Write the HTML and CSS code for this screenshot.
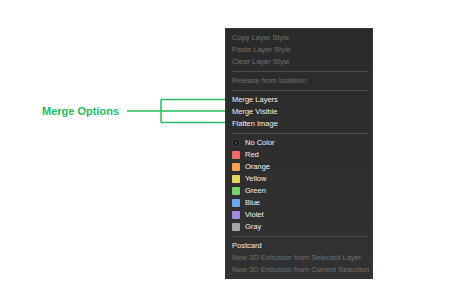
FILE: index.html
```html
<!DOCTYPE html>
<html lang="en">
<head>
  <meta charset="UTF-8">
  <meta name="viewport" content="width=device-width, initial-scale=1.0">
  <title>Merge Options</title>
  <link rel="stylesheet" href="styles.css">
</head>
<body>

  <div class="page">
    <!-- callout pointing at the merge items -->
    <div class="callout">
      <span class="callout-label">Merge Options</span>
      <svg class="callout-lines" width="99" height="26" viewBox="0 0 99 26">
        <path d="M0 13H99M34 1.5V24.5M34 1.5H99M34 24.5H99" fill="none" stroke="#22c062" stroke-width="1.5"/>
      </svg>
    </div>

    <ul class="menu">
      <li class="item disabled">Copy Layer Style</li>
      <li class="item disabled">Paste Layer Style</li>
      <li class="item disabled">Clear Layer Style</li>
      <li class="sep"></li>
      <li class="item disabled">Release from Isolation</li>
      <li class="sep"></li>
      <li class="item">Merge Layers</li>
      <li class="item">Merge Visible</li>
      <li class="item">Flatten Image</li>
      <li class="sep"></li>
      <li class="item"><span class="swatch none">
        <svg width="8" height="8" viewBox="0 0 8 8"><path d="M2 2L6 6M6 2L2 6" stroke="#444" stroke-width="1"/></svg>
      </span>No Color</li>
      <li class="item"><span class="swatch red"></span>Red</li>
      <li class="item"><span class="swatch orange"></span>Orange</li>
      <li class="item"><span class="swatch yellow"></span>Yellow</li>
      <li class="item"><span class="swatch green"></span>Green</li>
      <li class="item"><span class="swatch blue"></span>Blue</li>
      <li class="item"><span class="swatch violet"></span>Violet</li>
      <li class="item"><span class="swatch gray"></span>Gray</li>
      <li class="sep"></li>
      <li class="item">Postcard</li>
      <li class="item disabled">New 3D Extrusion from Selected Layer</li>
      <li class="item disabled">New 3D Extrusion from Current Selection</li>
    </ul>
  </div>

</body>
</html>
```

FILE: styles.css
```css
body {
  margin: 0;
  background: #fff;
  font-family: 'Liberation Sans', Arial, sans-serif;
}

.page {
  display: flex;
  align-items: flex-start;
  padding-top: 29px;
}

.callout {
  width: 226px;
  display: flex;
  align-items: center;
  margin-top: 69px;
  height: 26px;
}

.callout-label {
  padding-left: 42px;
  width: 85px;
  font-size: 11px;
  font-weight: bold;
  color: #22c062;
  white-space: nowrap;
}

.callout-lines {
  display: block;
}

.menu {
  list-style: none;
  margin: 0;
  padding: 3px 0;
  width: 146px;
  background: linear-gradient(#2a2a2a, #323232);
  box-shadow: 0 0 0 1px #3a3a3a;
}

.item {
  height: 12px;
  line-height: 12px;
  padding-left: 6px;
  font-size: 7.5px;
  color: #f0f0f0;
  white-space: nowrap;
  display: flex;
  align-items: center;
}

.item.disabled {
  color: #6e6e6e;
}

.sep {
  height: 7px;
  margin: 0 4px 0 6px;
  background: linear-gradient(#4a4a4a, #4a4a4a) no-repeat 0 3px / 100% 1px;
}

.swatch {
  width: 8px;
  height: 8px;
  margin-right: 5px;
  border-radius: 1px;
  flex-shrink: 0;
}

.swatch svg { display: block; }

.swatch.none { background: #161616; box-shadow: inset 0 0 0 1px #3c3c3c; }
.swatch.red { background: #f2696c; }
.swatch.orange { background: #f5a14f; }
.swatch.yellow { background: #e6d75a; }
.swatch.green { background: #7cd16e; }
.swatch.blue { background: #6ea7f0; }
.swatch.violet { background: #a48ade; }
.swatch.gray { background: #a7a7a7; }
```
